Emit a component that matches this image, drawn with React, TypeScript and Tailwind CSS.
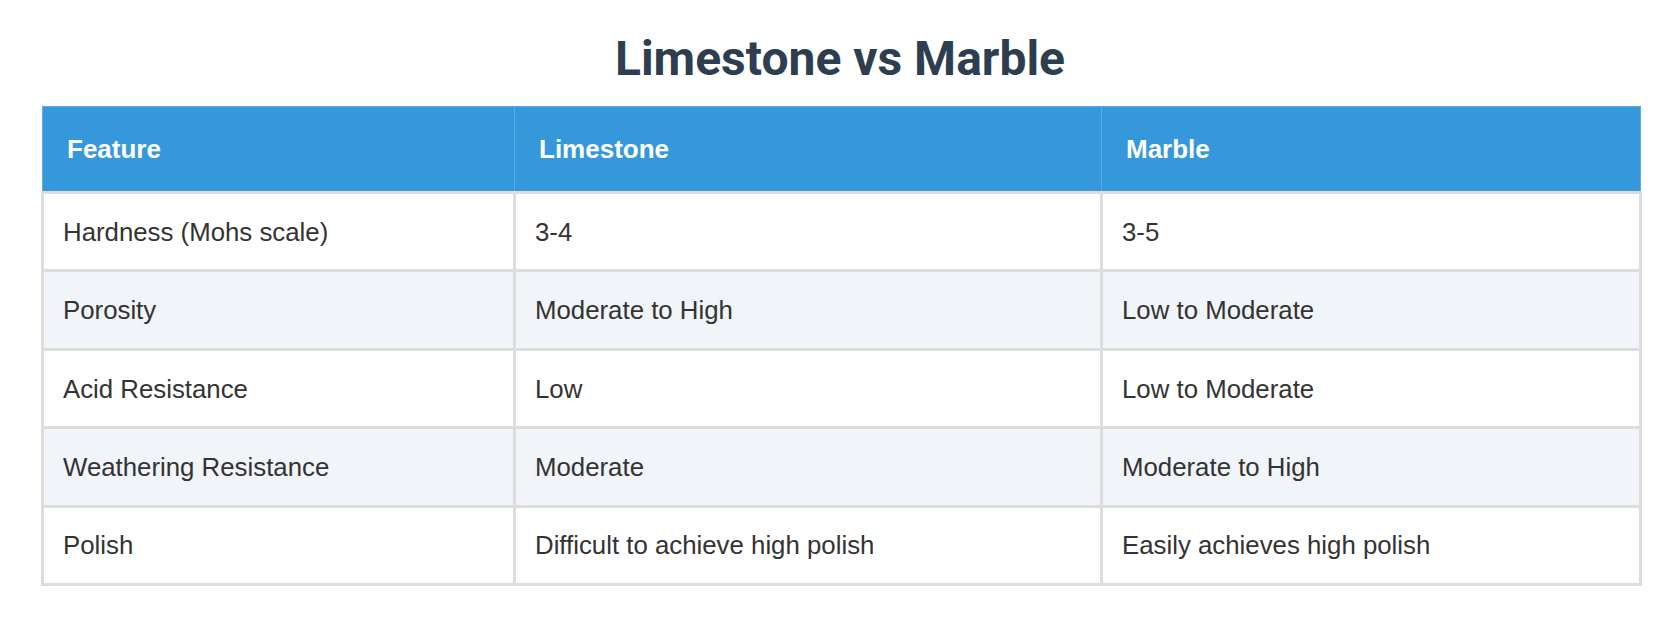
const rows = [
  { feature: 'Hardness (Mohs scale)', limestone: '3-4', marble: '3-5' },
  { feature: 'Porosity', limestone: 'Moderate to High', marble: 'Low to Moderate' },
  { feature: 'Acid Resistance', limestone: 'Low', marble: 'Low to Moderate' },
  { feature: 'Weathering Resistance', limestone: 'Moderate', marble: 'Moderate to High' },
  { feature: 'Polish', limestone: 'Difficult to achieve high polish', marble: 'Easily achieves high polish' },
];

export default function App() {
  return (
    <div className="min-h-screen bg-white px-[41px] pt-[31px] font-['Liberation_Sans',Arial,sans-serif]">
      <h1 className="mb-[19px] text-center font-['Roboto',sans-serif] text-[48px] font-bold leading-[56px] text-[#2c3e50]">
        Limestone vs Marble
      </h1>
      <table className="w-[1598px] table-fixed border-collapse text-left">
        <colgroup>
          <col className="w-[472px]" />
          <col className="w-[587px]" />
          <col className="w-[539px]" />
        </colgroup>
        <thead>
          <tr className="bg-[#3498db] text-white">
            <th className="border border-[#5dade2] px-[24px] py-[23px] text-[26px] font-bold leading-[38px]">Feature</th>
            <th className="border border-[#5dade2] px-[24px] py-[23px] text-[26px] font-bold leading-[38px]">Limestone</th>
            <th className="border border-[#5dade2] px-[24px] py-[23px] text-[26px] font-bold leading-[38px]">Marble</th>
          </tr>
        </thead>
        <tbody>
          {rows.map((r, i) => (
            <tr key={r.feature} className={i % 2 === 1 ? 'bg-[#f1f4f9]' : 'bg-white'}>
              <td className="border-[3px] border-[#dddddd] px-[19px] pt-[18.8px] pb-[18.2px] text-[25.8px] leading-[38.4px] text-[#333333]">{r.feature}</td>
              <td className="border-[3px] border-[#dddddd] px-[19px] pt-[18.8px] pb-[18.2px] text-[25.8px] leading-[38.4px] text-[#333333]">{r.limestone}</td>
              <td className="border-[3px] border-[#dddddd] px-[19px] pt-[18.8px] pb-[18.2px] text-[25.8px] leading-[38.4px] text-[#333333]">{r.marble}</td>
            </tr>
          ))}
        </tbody>
      </table>
    </div>
  );
}
